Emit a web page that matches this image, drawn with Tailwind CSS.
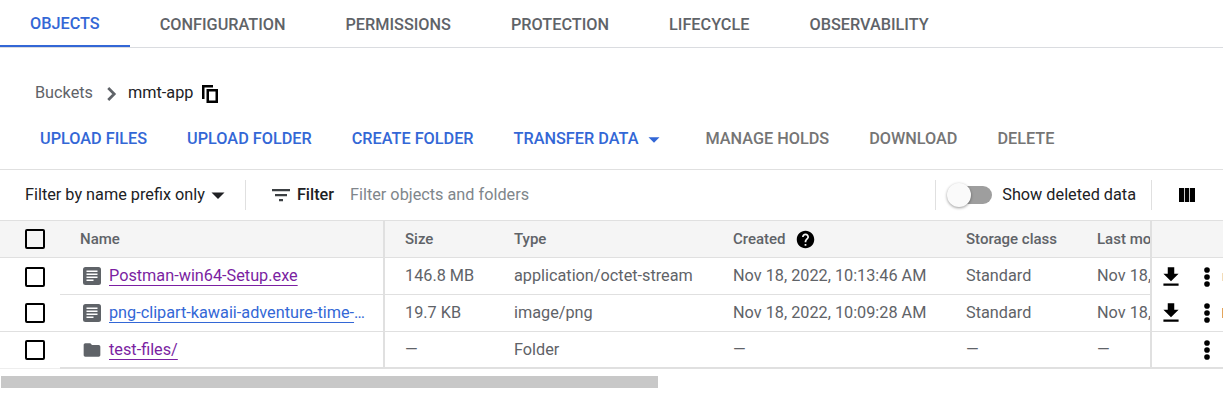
<!DOCTYPE html>
<html>
  <head>
    <meta charset="UTF-8" />
    <title>mmt-app</title>
    <script src="https://cdn.jsdelivr.net/npm/@tailwindcss/browser@4"></script>
  </head>
  <body class="bg-white h-[416px] w-[1223px] overflow-hidden font-['Roboto',sans-serif] text-[16.25px] text-[#5f6368]">
    <!-- tabs -->
    <nav class="h-[48px] border-b border-[#dadce0] flex font-medium">
      <a class="px-[30px] h-[47px] pt-[3px] flex items-center text-[#3367d6] border-b-2 border-[#3367d6]">OBJECTS</a>
      <a class="px-[30px] pt-[3px] flex items-center">CONFIGURATION</a>
      <a class="px-[30px] pt-[3px] flex items-center">PERMISSIONS</a>
      <a class="px-[30px] pt-[3px] flex items-center">PROTECTION</a>
      <a class="px-[30px] pt-[3px] flex items-center">LIFECYCLE</a>
      <a class="px-[30px] pt-[3px] flex items-center">OBSERVABILITY</a>
    </nav>

    <!-- breadcrumb -->
    <div class="h-[45px] mt-[23px] pl-[35px] flex items-center">
      <span>Buckets</span>
      <svg class="w-[22px] h-[22px] ml-[7px] mr-[6px]" viewBox="0 0 24 24" fill="none" stroke="#5f6368" stroke-width="3"><path d="M9 5.500 15.500 12 9 18.500"/></svg>
      <span class="text-[#202124]">mmt-app</span>
      <svg class="w-[16px] h-[18px] ml-[9px]" viewBox="0 0 16 18" fill="#000" fill-rule="evenodd"><path d="M0 0h11v2.500H2.500V14H0z"/><path d="M4.500 4H16v14H4.500zM7 6.500v9h6.500v-9z"/></svg>
    </div>

    <!-- actions -->
    <div class="h-[44px] pt-[2px] mb-[9px] pl-[40px] flex items-center font-medium gap-[40px]">
      <span class="text-[#3367d6]">UPLOAD FILES</span>
      <span class="text-[#3367d6]">UPLOAD FOLDER</span>
      <span class="text-[#3367d6]">CREATE FOLDER</span>
      <span class="text-[#3367d6] flex items-center">TRANSFER DATA<svg class="w-[22px] h-[22px] ml-[5px]" viewBox="0 0 24 24" fill="#3367d6"><path d="M6 10l6 6 6-6z"/></svg></span>
      <span class="text-[#757575]">MANAGE HOLDS</span>
      <span class="text-[#757575]">DOWNLOAD</span>
      <span class="text-[#757575]">DELETE</span>
    </div>

    <!-- filter bar -->
    <div class="h-[51px] border-t border-[#e0e0e0] flex items-center">
      <span class="ml-[25px] text-[#202124]">Filter by name prefix only</span>
      <svg class="w-[24px] h-[24px] ml-[1px]" viewBox="0 0 24 24" fill="#202124"><path d="M5.500 9.500 12 16l6.500-6.500z"/></svg>
      <div class="w-px h-[30px] bg-[#e0e0e0] ml-[15px]"></div>
      <svg class="w-[24px] h-[24px] ml-[23px]" viewBox="0 0 24 24" fill="#3c4043"><path d="M3 6h18v2.200H3zm3 5h12v2.200H6zm4 5h4v2.200h-4z"/></svg>
      <span class="ml-[4px] font-medium text-[#202124]">Filter</span>
      <span class="ml-[16px] text-[#80868b]">Filter objects and folders</span>
      <div class="w-px h-[30px] bg-[#e0e0e0] ml-auto"></div>
      <div class="relative w-[38px] h-[18px] ml-[18px] mr-[10px] rounded-full bg-[#9e9e9e]">
        <div class="absolute left-[-7px] top-[-3px] w-[24px] h-[24px] rounded-full bg-[#fafafa] shadow-[0_1px_3px_rgba(0,0,0,0.4)]"></div>
      </div>
      <span class="text-[#202124]">Show deleted data</span>
      <div class="w-px h-[30px] bg-[#e0e0e0] ml-[15px]"></div>
      <svg class="w-[24px] h-[24px] ml-[23px] mr-[24px]" viewBox="0 0 24 24" fill="#000"><path d="M4 5h5v14H4zm5.800 0h4.400v14H9.800zm5.200 0h5v14h-5z"/></svg>
    </div>

    <!-- table -->
    <div class="border-t border-[#e0e0e0] overflow-hidden">
      <div class="h-[37px] grid grid-cols-[60px_325px_109px_219px_233px_131px_73px_73px] items-center bg-[#f5f5f5] border-b border-[#e0e0e0] font-medium text-[15px]">
        <div class="pl-[25px]"><div class="w-[20px] h-[20px] rounded-[2px] border-2 border-black"></div></div>
        <div class="pl-[20px] h-full flex items-center border-r-2 border-[#e0e0e0]">Name</div>
        <div class="pl-[20px]">Size</div>
        <div class="pl-[20px]">Type</div>
        <div class="pl-[20px] flex items-center">Created
          <svg class="w-[21px] h-[21px] ml-[9px]" viewBox="0 0 24 24" fill="#000"><path d="M12 2C6.480 2 2 6.480 2 12s4.480 10 10 10 10-4.480 10-10S17.520 2 12 2zm1 17h-2v-2h2v2zm2.070-7.750-.9.920C13.450 12.900 13 13.500 13 15h-2v-.5c0-1.100.45-2.100 1.170-2.830l1.240-1.260c.37-.36.590-.86.590-1.410 0-1.100-.9-2-2-2s-2 .9-2 2H8c0-2.210 1.790-4 4-4s4 1.790 4 4c0 .88-.36 1.680-.93 2.250z"/></svg>
        </div>
        <div class="pl-[20px]">Storage class</div>
        <div class="pl-[20px] whitespace-nowrap overflow-hidden">Last modified</div>
        <div class="h-full border-l-2 border-[#e0e0e0]"></div>
      </div>

      <div class="h-[37px] grid grid-cols-[60px_325px_109px_219px_233px_131px_73px_73px] items-center">
        <div class="pl-[25px]"><div class="w-[20px] h-[20px] rounded-[2px] border-2 border-black"></div></div>
        <div class="h-full flex items-center pl-[22px] border-b border-r-2 border-[#e0e0e0]">
          <svg class="w-[20px] h-[20px]" viewBox="0 0 20 20"><rect x="1" y="1" width="18" height="18" rx="2.500" fill="#5f6368"/><path d="M4.500 4.500h11V6h-11zm0 3h11V9h-11zm0 3h11V12h-11zm0 3h7V15h-7z" fill="#fff"/></svg>
          <a class="ml-[7px] text-[#7b1fa2] underline underline-offset-[4px]">Postman-win64-Setup.exe</a>
        </div>
        <div class="h-full flex items-center pl-[20px] border-b border-[#e0e0e0]">146.8 MB</div>
        <div class="h-full flex items-center pl-[20px] border-b border-[#e0e0e0]">application/octet-stream</div>
        <div class="h-full flex items-center pl-[20px] border-b border-[#e0e0e0]">Nov 18, 2022, 10:13:46 AM</div>
        <div class="h-full flex items-center pl-[20px] border-b border-[#e0e0e0]">Standard</div>
        <div class="h-full flex items-center pl-[20px] border-b border-[#e0e0e0] whitespace-nowrap overflow-hidden">Nov 18, 2022</div>
        <div class="h-full flex items-center border-l-2 border-[#e0e0e0]">
          <svg class="w-[26px] h-[26px] ml-[6px]" viewBox="0 0 24 24" fill="#000"><path d="M19 9h-4V3H9v6H5l7 7 7-7zM5 18v2h14v-2H5z"/></svg>
          <svg class="w-[26px] h-[26px] ml-[10px]" viewBox="0 0 24 24" fill="#000"><circle cx="12" cy="5.500" r="2.600"/><circle cx="12" cy="12" r="2.600"/><circle cx="12" cy="18.500" r="2.600"/></svg>
          <div class="w-px h-[8px] ml-auto bg-[#f3dcb8]"></div>
        </div>
      </div>

      <div class="h-[37px] grid grid-cols-[60px_325px_109px_219px_233px_131px_73px_73px] items-center border-b border-[#e0e0e0]">
        <div class="pl-[25px]"><div class="w-[20px] h-[20px] rounded-[2px] border-2 border-black"></div></div>
        <div class="h-full flex items-center pl-[22px] border-r-2 border-[#e0e0e0]">
          <svg class="w-[20px] h-[20px]" viewBox="0 0 20 20"><rect x="1" y="1" width="18" height="18" rx="2.500" fill="#5f6368"/><path d="M4.500 4.500h11V6h-11zm0 3h11V9h-11zm0 3h11V12h-11zm0 3h7V15h-7z" fill="#fff"/></svg>
          <a class="ml-[7px] w-[256px] truncate text-[#3367d6] underline underline-offset-[4px]">png-clipart-kawaii-adventure-time-finn-the-human.png</a>
        </div>
        <div class="pl-[20px]">19.7 KB</div>
        <div class="pl-[20px]">image/png</div>
        <div class="pl-[20px]">Nov 18, 2022, 10:09:28 AM</div>
        <div class="pl-[20px]">Standard</div>
        <div class="pl-[20px] whitespace-nowrap overflow-hidden">Nov 18, 2022</div>
        <div class="h-full flex items-center border-l-2 border-[#e0e0e0]">
          <svg class="w-[26px] h-[26px] ml-[6px]" viewBox="0 0 24 24" fill="#000"><path d="M19 9h-4V3H9v6H5l7 7 7-7zM5 18v2h14v-2H5z"/></svg>
          <svg class="w-[26px] h-[26px] ml-[10px]" viewBox="0 0 24 24" fill="#000"><circle cx="12" cy="5.500" r="2.600"/><circle cx="12" cy="12" r="2.600"/><circle cx="12" cy="18.500" r="2.600"/></svg>
          <div class="w-px h-[10px] ml-auto bg-[#e3a55c]"></div>
        </div>
      </div>

      <div class="h-[37px] grid grid-cols-[60px_325px_109px_219px_233px_131px_73px_73px] items-center">
        <div class="h-full flex items-center pl-[25px] border-b border-[#eeeeee]"><div class="w-[20px] h-[20px] rounded-[2px] border-2 border-black"></div></div>
        <div class="h-full flex items-center pl-[22px] border-b-2 border-r-2 border-[#e0e0e0]">
          <svg class="w-[20px] h-[20px]" viewBox="0 0 24 24" fill="#5f6368"><path d="M10 4H4c-1.100 0-2 .9-2 2v12c0 1.100.9 2 2 2h16c1.100 0 2-.9 2-2V8c0-1.100-.9-2-2-2h-8l-2-2z"/></svg>
          <a class="ml-[7px] mt-[2px] text-[#7b1fa2] underline underline-offset-[4px]">test-files/</a>
        </div>
        <div class="h-full flex items-center pl-[20px] pt-[2px] border-b-2 border-[#e0e0e0]">—</div>
        <div class="h-full flex items-center pl-[20px] pt-[2px] border-b-2 border-[#e0e0e0]">Folder</div>
        <div class="h-full flex items-center pl-[20px] pt-[2px] border-b-2 border-[#e0e0e0]">—</div>
        <div class="h-full flex items-center pl-[20px] pt-[2px] border-b-2 border-[#e0e0e0]">—</div>
        <div class="h-full flex items-center pl-[20px] pt-[2px] border-b-2 border-[#e0e0e0]">—</div>
        <div class="h-full flex items-center border-l-2 border-b-2 border-[#e0e0e0]">
          <svg class="w-[26px] h-[26px] ml-[42px]" viewBox="0 0 24 24" fill="#000"><circle cx="12" cy="5.500" r="2.600"/><circle cx="12" cy="12" r="2.600"/><circle cx="12" cy="18.500" r="2.600"/></svg>
        </div>
      </div>
    </div>

    <!-- horizontal scrollbar -->
    <div class="h-[12px] w-[657px] ml-px mt-[7px] bg-[#c8c8c8]"></div>
  </body>
</html>
